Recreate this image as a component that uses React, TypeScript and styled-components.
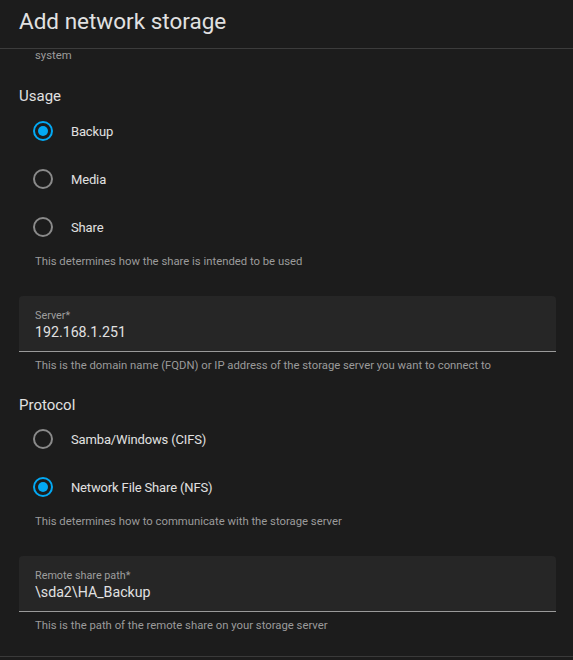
import React from "react";
import styled, { createGlobalStyle } from "styled-components";

const Global = createGlobalStyle`
  html, body { margin: 0; padding: 0; background: #1c1c1c; }
  body { font-family: Roboto, "Noto Sans", Arial, sans-serif; -webkit-font-smoothing: antialiased; }
`;

const Dialog = styled.div`
  width: 573px;
  height: 660px;
  background: #1c1c1c;
  display: flex;
  flex-direction: column;
  overflow: hidden;
`;

const Header = styled.div`
  height: 49px;
  flex: none;
  border-bottom: 1px solid #3c3c3c;
  display: flex;
  align-items: center;
  padding: 0 19px 7px;
  box-sizing: border-box;
`;

const Title = styled.h2`
  margin: 0;
  font-size: 22.5px;
  font-weight: 400;
  color: #e1e1e1;
`;

const Content = styled.div`
  flex: 1;
  padding: 0 17px 0 19px;
  display: flex;
  flex-direction: column;
  overflow: hidden;
`;

const Footer = styled.div`
  flex: none;
  height: 4px;
  border-top: 1px solid #3a3a3a;
  box-sizing: border-box;
`;

const Helper = styled.div`
  font-size: 11.3px;
  color: #9b9b9b;
  padding-left: 16px;
  line-height: 16px;
`;

const SectionLabel = styled.div`
  font-size: 15px;
  color: #e1e1e1;
  line-height: 20px;
`;

const RadioRow = styled.label`
  display: flex;
  align-items: center;
  height: 48px;
  padding-left: 14px;
  gap: 18px;
  cursor: pointer;
`;

const RadioCircle = styled.span<{ $checked: boolean }>`
  width: 20px;
  height: 20px;
  box-sizing: border-box;
  border-radius: 50%;
  border: 2px solid ${(p) => (p.$checked ? "#03a9f4" : "#8a8a8a")};
  display: flex;
  align-items: center;
  justify-content: center;
  &::after {
    content: "";
    width: 10px;
    height: 10px;
    border-radius: 50%;
    background: ${(p) => (p.$checked ? "#03a9f4" : "transparent")};
  }
`;

const RadioText = styled.span`
  font-size: 13px;
  letter-spacing: -0.15px;
  color: #e1e1e1;
`;

const Field = styled.div`
  background: #262626;
  border-radius: 4px 4px 0 0;
  border-bottom: 1px solid #9a9a9a;
  height: 56px;
  box-sizing: border-box;
  padding: 13px 16px 0;
  display: flex;
  flex-direction: column;
`;

const FieldLabel = styled.div`
  font-size: 10.8px;
  color: #9e9e9e;
  line-height: 14px;
`;

const FieldValue = styled.div`
  font-size: 14.2px;
  color: #e1e1e1;
  line-height: 20px;
  margin-top: -1px;
`;

const Block = styled.div<{ $mt: number }>`
  margin-top: ${(p) => p.$mt}px;
`;

type RadioProps = { label: string; checked?: boolean };
const Radio = ({ label, checked = false }: RadioProps) => (
  <RadioRow>
    <RadioCircle $checked={checked} />
    <RadioText>{label}</RadioText>
  </RadioRow>
);

export default function App() {
  return (
    <>
      <Global />
      <Dialog>
        <Header>
          <Title>Add network storage</Title>
        </Header>
        <Content>
          <Block $mt={-1}>
            <Helper>system</Helper>
          </Block>
          <Block $mt={22}>
            <SectionLabel>Usage</SectionLabel>
          </Block>
          <Block $mt={1}>
            <Radio label="Backup" checked />
            <Radio label="Media" />
            <Radio label="Share" />
          </Block>
          <Block $mt={3}>
            <Helper>This determines how the share is intended to be used</Helper>
          </Block>
          <Block $mt={26}>
            <Field>
              <FieldLabel>Server*</FieldLabel>
              <FieldValue>192.168.1.251</FieldValue>
            </Field>
          </Block>
          <Block $mt={6}>
            <Helper>
              This is the domain name (FQDN) or IP address of the storage server you want to connect to
            </Helper>
          </Block>
          <Block $mt={21}>
            <SectionLabel>Protocol</SectionLabel>
          </Block>
          <Block $mt={0}>
            <Radio label="Samba/Windows (CIFS)" />
            <Radio label="Network File Share (NFS)" checked />
          </Block>
          <Block $mt={3}>
            <Helper>This determines how to communicate with the storage server</Helper>
          </Block>
          <Block $mt={26}>
            <Field>
              <FieldLabel>Remote share path*</FieldLabel>
              <FieldValue>\sda2\HA_Backup</FieldValue>
            </Field>
          </Block>
          <Block $mt={6}>
            <Helper>This is the path of the remote share on your storage server</Helper>
          </Block>
        </Content>
        <Footer />
      </Dialog>
    </>
  );
}
